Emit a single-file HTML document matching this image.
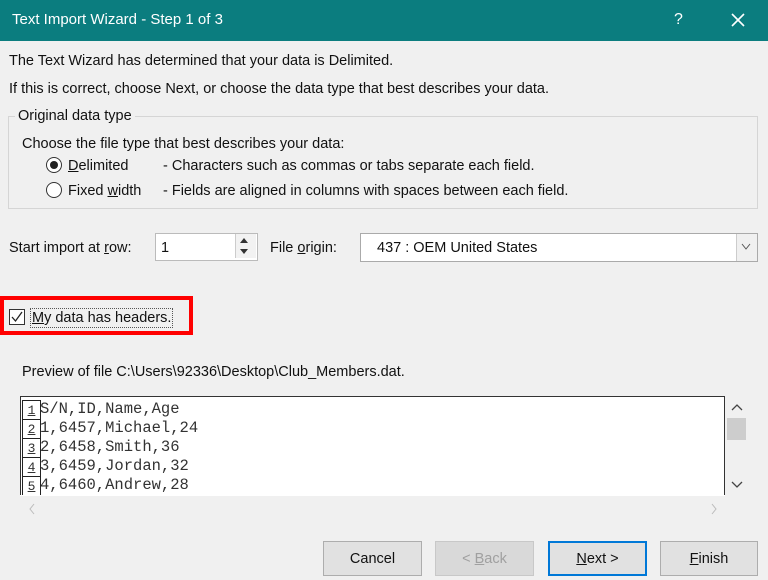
<!DOCTYPE html>
<html><head><style>
body{margin:0;width:768px;height:580px;background:#f0f0f0;position:relative;overflow:hidden;font-family:"Liberation Sans",sans-serif;font-size:14.5px;color:#111}
.a{position:absolute;white-space:nowrap}
.t{line-height:18px}
.btn{position:absolute;top:541px;height:33px;border:1px solid #adadad;background:#e1e1e1;text-align:center;line-height:35px;font-size:14.5px}
.mono{font-family:"Liberation Mono",monospace;font-size:15.5px;color:#333}
.rn{position:absolute;left:22px;width:17px;height:18px;border:1px solid #222;border-bottom:none;font-family:"Liberation Mono",monospace;font-size:13px;text-decoration:underline;line-height:19px;text-align:center;color:#333}
</style></head><body>
<div class="a" style="left:0;top:0;width:768px;height:41px;background:#0b7d7f"></div>
<div class="a t" style="left:12px;top:11px;color:#fff;font-size:15px">Text Import Wizard - Step 1 of 3</div>
<div class="a t" style="left:674px;top:11px;color:#fff;font-size:16px">?</div>
<svg class="a" style="left:731px;top:13px" width="14" height="14"><path d="M1 1L13 13M13 1L1 13" stroke="#fff" stroke-width="1.6"/></svg>

<div class="a t" style="left:9px;top:52px">The Text Wizard has determined that your data is Delimited.</div>
<div class="a t" style="left:9px;top:80px">If this is correct, choose Next, or choose the data type that best describes your data.</div>

<div class="a" style="left:8px;top:116px;width:748px;height:91px;border:1px solid #d5d5d5"></div>
<div class="a t" style="left:15px;top:107px;background:#f0f0f0;padding:0 3px">Original data type</div>
<div class="a t" style="left:22px;top:135px">Choose the file type that best describes your data:</div>
<div class="a" style="left:46px;top:157px;width:14px;height:14px;border:1px solid #333;border-radius:50%;background:#fff"></div>
<div class="a" style="left:50px;top:161px;width:8px;height:8px;border-radius:50%;background:#222"></div>
<div class="a t" style="left:68px;top:157px"><u>D</u>elimited</div>
<div class="a t" style="left:163px;top:157px">- Characters such as commas or tabs separate each field.</div>
<div class="a" style="left:46px;top:182px;width:14px;height:14px;border:1px solid #333;border-radius:50%;background:#fff"></div>
<div class="a t" style="left:68px;top:182px">Fixed <u>w</u>idth</div>
<div class="a t" style="left:163px;top:182px">- Fields are aligned in columns with spaces between each field.</div>

<div class="a t" style="left:9px;top:239px">Start import at <u>r</u>ow:</div>
<div class="a" style="left:155px;top:233px;width:101px;height:26px;border:1px solid #bbb;background:#fff"></div>
<div class="a t" style="left:161px;top:239px">1</div>
<div class="a" style="left:235px;top:234px;width:20px;height:24px;background:#f2f2f2;border-left:1px solid #ccc"></div>
<div class="a" style="left:240px;top:238px;border:4px solid transparent;border-bottom:5px solid #333;border-top:none"></div>
<div class="a" style="left:240px;top:249px;border:4px solid transparent;border-top:5px solid #333;border-bottom:none"></div>
<div class="a t" style="left:270px;top:239px">File <u>o</u>rigin:</div>
<div class="a" style="left:360px;top:233px;width:396px;height:27px;border:1px solid #aaa;background:#fff"></div>
<div class="a t" style="left:377px;top:239px">437 : OEM United States</div>
<div class="a" style="left:736px;top:234px;width:20px;height:27px;background:#f0f0f0;border-left:1px solid #ccc"></div>
<svg class="a" style="left:741px;top:243px" width="10" height="7"><path d="M1 1L5 6L9 1" stroke="#555" fill="none"/></svg>

<div class="a" style="left:0;top:296px;width:185px;height:31px;border:4px solid #f00"></div>
<div class="a" style="left:9px;top:309px;width:14px;height:14px;border:1px solid #333;background:#fff"></div>
<svg class="a" style="left:10px;top:310px" width="14" height="14"><path d="M2 7L5.5 11L12 2" stroke="#222" stroke-width="1.3" fill="none"/></svg>
<div class="a t" style="left:30px;top:308px;border:1px dotted #555;padding:0 1px"><u>M</u>y data has headers.</div>

<div class="a t" style="left:22px;top:363px">Preview of file C:\Users\92336\Desktop\Club_Members.dat.</div>
<div class="a" style="left:20px;top:396px;width:703px;height:99px;border:1px solid #333;border-bottom:none;background:#fff;overflow:hidden"></div>
<div class="rn" style="top:400px">1</div>
<div class="rn" style="top:419px">2</div>
<div class="rn" style="top:438px">3</div>
<div class="rn" style="top:457px">4</div>
<div class="rn" style="top:476px">5</div>
<div class="a mono" style="left:40px;top:400px;line-height:19px">S/N,ID,Name,Age<br>1,6457,Michael,24<br>2,6458,Smith,36<br>3,6459,Jordan,32<br>4,6460,Andrew,28</div>
<div class="a" style="left:20px;top:495px;width:705px;height:1px;background:#fff"></div>
<svg class="a" style="left:731px;top:403px" width="12" height="8"><path d="M1 7L6 2L11 7" stroke="#444" stroke-width="1.3" fill="none"/></svg>
<div class="a" style="left:727px;top:418px;width:19px;height:22px;background:#cdcdcd"></div>
<svg class="a" style="left:731px;top:481px" width="12" height="8"><path d="M1 1L6 6L11 1" stroke="#444" stroke-width="1.3" fill="none"/></svg>
<svg class="a" style="left:28px;top:503px" width="8" height="12"><path d="M6 1L2 6L6 11" stroke="#bbb" fill="none"/></svg>
<svg class="a" style="left:710px;top:503px" width="8" height="12"><path d="M2 1L6 6L2 11" stroke="#bbb" fill="none"/></svg>

<div class="btn" style="left:323px;width:97px">Cancel</div>
<div class="btn" style="left:435px;width:97px;color:#a0a0a0;border-color:#c8c8c8;background:#d9d9d9">&lt; <u>B</u>ack</div>
<div class="btn" style="left:548px;width:95px;border:2px solid #0078d7;height:31px;line-height:33px"><u>N</u>ext &gt;</div>
<div class="btn" style="left:660px;width:96px"><u>F</u>inish</div>
</body></html>
